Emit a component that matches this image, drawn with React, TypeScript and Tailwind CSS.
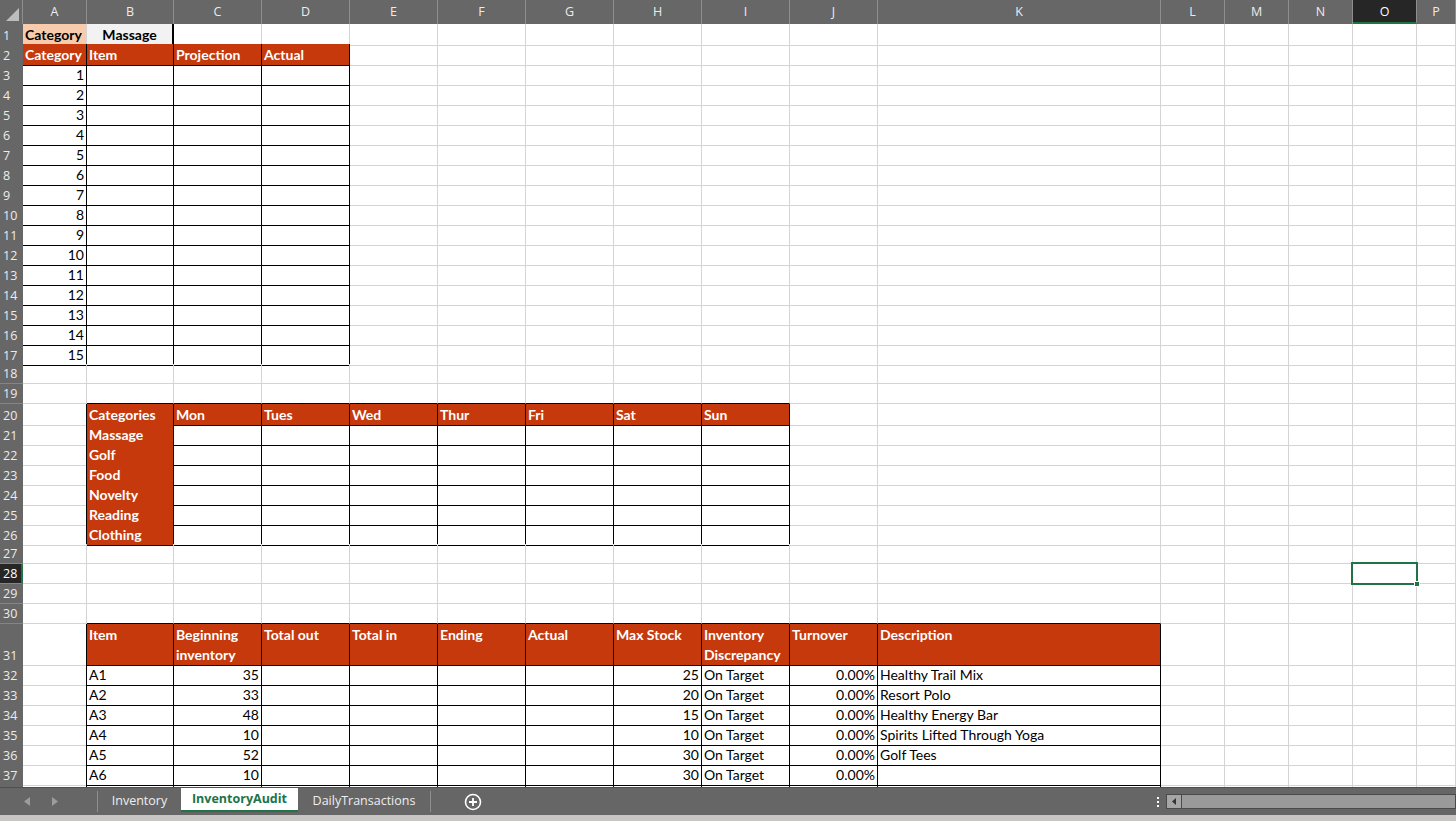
import React from "react";

// column template: row header, A..P
const GRID =
  "grid grid-cols-[23px_64px_87px_88px_88px_88px_88px_88px_88px_88px_88px_283px_64px_64px_64px_64px_1fr]";
const LETTERS = ["A", "B", "C", "D", "E", "F", "G", "H", "I", "J", "K", "L", "M", "N", "O", "P"];
const ROWS = Array.from({ length: 38 }, (_, i) => i + 1);

type Cell = { t: string; right?: boolean };

const data: Record<string, Cell> = {};
const put = (r: number, c: number, t: string, right = false) => {
  data[`${r}-${c}`] = { t, right };
};

// top table
put(1, 1, "Category");
put(1, 2, "Massage");
["Category", "Item", "Projection", "Actual"].forEach((t, i) => put(2, i + 1, t));
for (let i = 1; i <= 15; i++) put(i + 2, 1, String(i), true);

// weekly table
["Categories", "Mon", "Tues", "Wed", "Thur", "Fri", "Sat", "Sun"].forEach((t, i) => put(20, i + 2, t));
["Massage", "Golf", "Food", "Novelty", "Reading", "Clothing"].forEach((t, i) => put(21 + i, 2, t));

// audit table
[
  "Item",
  "Beginning inventory",
  "Total out",
  "Total in",
  "Ending",
  "Actual",
  "Max Stock",
  "Inventory Discrepancy",
  "Turnover",
  "Description",
].forEach((t, i) => put(31, i + 2, t));

const items = [
  { id: "A1", begin: 35, max: 25, desc: "Healthy Trail Mix" },
  { id: "A2", begin: 33, max: 20, desc: "Resort Polo" },
  { id: "A3", begin: 48, max: 15, desc: "Healthy Energy Bar" },
  { id: "A4", begin: 10, max: 10, desc: "Spirits Lifted Through Yoga" },
  { id: "A5", begin: 52, max: 30, desc: "Golf Tees" },
  { id: "A6", begin: 10, max: 30, desc: "" },
];
items.forEach((it, i) => {
  const r = 32 + i;
  put(r, 2, it.id);
  put(r, 3, String(it.begin), true);
  put(r, 8, String(it.max), true);
  put(r, 9, "On Target");
  put(r, 10, "0.00%", true);
  if (it.desc) put(r, 11, it.desc);
});

function inTable(r: number, c: number) {
  if (r >= 2 && r <= 17 && c >= 1 && c <= 4) return true;
  if (r >= 20 && r <= 26 && c >= 2 && c <= 9) return true;
  if (r >= 31 && r <= 40 && c >= 2 && c <= 11) return true;
  return false;
}

function isHead(r: number, c: number) {
  if (r === 2 && c >= 1 && c <= 4) return true;
  if (r === 20 && c >= 2 && c <= 9) return true;
  if (r >= 21 && r <= 26 && c === 2) return true;
  if (r === 31 && c >= 2 && c <= 11) return true;
  return false;
}

const SEL_ROW = 28;
const SEL_COL = 15;

function clsx(...parts: (string | false | undefined)[]) {
  return parts.filter(Boolean).join(" ");
}

function SheetCell({ r, c }: { r: number; c: number }) {
  const cell = data[`${r}-${c}`];
  const rightBlack = inTable(r, c) || inTable(r, c + 1);
  const bottomBlack = inTable(r, c) || inTable(r + 1, c);
  const head = isHead(r, c);
  const isB1 = r === 1 && c === 2;
  const isA1 = r === 1 && c === 1;

  return (
    <div
      className={clsx(
        "relative border-b px-[2px] pt-[1px] leading-[20px] text-[14px] text-black",
        isB1 ? "border-r-2 border-r-black" : rightBlack ? "border-r border-r-black" : "border-r border-r-[#d4d4d4]",
        bottomBlack ? "border-b-black" : "border-b-[#d4d4d4]",
        head && "bg-[#c5390d] font-bold text-white",
        isA1 && "bg-[#f8cbad] font-bold",
        isB1 && "bg-[#f2f2f2] text-center font-bold",
        r === 31 ? "whitespace-normal" : "whitespace-nowrap",
        cell?.right && "text-right"
      )}
    >
      {cell?.t}
      {r === SEL_ROW && c === SEL_COL && (
        <div className="absolute -left-[2px] -top-[2px] z-10 h-[23px] w-[67px] border-2 border-[#217346]">
          <div className="absolute -bottom-[4px] -right-[4px] h-[6px] w-[6px] border border-white bg-[#217346]" />
        </div>
      )}
    </div>
  );
}

function ColumnHeader() {
  return (
    <div className={`${GRID} h-[24px] bg-[#676767] font-['Open_Sans',sans-serif] text-[12.5px] text-[#ececec]`}>
      <div className="relative border-r border-r-[#8e8e8e]">
        <svg className="absolute bottom-[3px] right-[3px]" width="13" height="13" viewBox="0 0 13 13">
          <path d="M13 0 L13 13 L0 13 Z" fill="#bdbdbd" />
        </svg>
      </div>
      {LETTERS.map((l, i) => (
        <div
          key={l}
          className={clsx(
            "flex items-center justify-center border-r border-r-[#8e8e8e]",
            i + 1 === SEL_COL && "border-b-2 border-b-[#217346] bg-[#262626] pt-[2px] text-white"
          )}
        >
          {l}
        </div>
      ))}
    </div>
  );
}

function Grid() {
  return (
    <div className="flex-1 overflow-hidden bg-white font-['Lato',sans-serif]">
      {ROWS.map((r) => (
        <div key={r} className={`${GRID} ${r === 31 ? "h-[40px]" : "h-[20px]"}`}>
          <div
            className={clsx(
              "flex items-end border-b border-b-[#858585] pl-[3px] font-['Open_Sans',sans-serif] text-[12.5px] leading-[19px]",
              r === SEL_ROW
                ? "border-r-2 border-r-[#217346] bg-[#262626] text-white"
                : "bg-[#676767] text-[#ececec]"
            )}
          >
            {r < 38 ? r : ""}
          </div>
          {LETTERS.map((_, i) => (
            <SheetCell key={i} r={r} c={i + 1} />
          ))}
        </div>
      ))}
    </div>
  );
}

function TabBar() {
  return (
    <div className="flex h-[28px] items-stretch border-t border-t-[#4f4f4f] bg-[#666666] font-['Open_Sans',sans-serif] text-[12.5px]">
      <div className="flex w-[97px] items-center pl-[24px]">
        <svg width="6" height="9" viewBox="0 0 6 9">
          <path d="M6 0 L0 4.5 L6 9 Z" fill="#9c9c9c" />
        </svg>
        <svg className="ml-[22px]" width="6" height="9" viewBox="0 0 6 9">
          <path d="M0 0 L6 4.5 L0 9 Z" fill="#9c9c9c" />
        </svg>
      </div>
      <div className="my-[3px] w-px bg-[#8f8f8f]" />
      <div className="flex w-[83px] items-center justify-center text-[#eeeeee]">Inventory</div>
      <div className="mb-[3px] flex w-[117px] items-center justify-center border-b-2 border-b-[#217346] bg-white font-bold text-[#217346]">
        InventoryAudit
      </div>
      <div className="flex w-[132px] items-center justify-center text-[#eeeeee]">DailyTransactions</div>
      <div className="my-[3px] w-px bg-[#8f8f8f]" />
      <div className="flex w-[84px] items-center justify-center">
        <svg width="18" height="18" viewBox="0 0 18 18">
          <circle cx="9" cy="9" r="7.5" fill="none" stroke="#ffffff" strokeWidth="1.6" />
          <path d="M9 5 V13 M5 9 H13" stroke="#ffffff" strokeWidth="1.8" />
        </svg>
      </div>
      <div className="ml-auto flex w-[306px] items-center">
        <div className="flex w-[16px] flex-col items-center gap-[2px]">
          <span className="h-[2px] w-[2px] bg-white" />
          <span className="h-[2px] w-[2px] bg-white" />
          <span className="h-[2px] w-[2px] bg-white" />
        </div>
        <div className="flex h-[15px] flex-1 border border-[#4a4a4a] bg-[#9a9a9a]">
          <div className="flex w-[15px] items-center justify-center border-r border-r-[#4a4a4a] bg-[#a6a6a6]">
            <svg width="4" height="7" viewBox="0 0 4 7">
              <path d="M4 0 L0 3.5 L4 7 Z" fill="#333333" />
            </svg>
          </div>
        </div>
      </div>
    </div>
  );
}

export default function App() {
  return (
    <div className="flex h-[821px] w-[1456px] flex-col overflow-hidden bg-white">
      <ColumnHeader />
      <Grid />
      <TabBar />
      <div className="h-[6px] bg-[#c8c6c4]" />
    </div>
  );
}
